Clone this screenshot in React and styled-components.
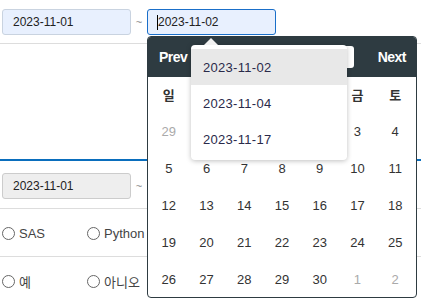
import styled, { createGlobalStyle } from "styled-components";

const GlobalStyle = createGlobalStyle`
  body {
    margin: 0;
    font-family: "Liberation Sans", "Noto Sans CJK KR", sans-serif;
    color: #333;
    background: #fff;
  }
`;

const days = ["일", "월", "화", "수", "목", "금", "토"];
const weeks = [
  [29, 30, 31, 1, 2, 3, 4],
  [5, 6, 7, 8, 9, 10, 11],
  [12, 13, 14, 15, 16, 17, 18],
  [19, 20, 21, 22, 23, 24, 25],
  [26, 27, 28, 29, 30, 1, 2],
];
const options = ["2023-11-02", "2023-11-04", "2023-11-17"];

const App = () => {
  return (
    <Page>
      <GlobalStyle />
      <TopSection>
        <RangeRow>
          <DateInput>2023-11-01</DateInput>
          <Tilde>~</Tilde>
          <DateInput $focused>
            <Caret />
            2023-11-02
          </DateInput>
        </RangeRow>
      </TopSection>
      <BottomSection>
        <RangeRow $bottom>
          <DateInput $disabled>2023-11-01</DateInput>
          <Tilde>~</Tilde>
        </RangeRow>
        <RadioRow>
          <Radio>
            <Circle />
            SAS
          </Radio>
          <Radio>
            <Circle />
            Python
          </Radio>
        </RadioRow>
        <RadioRow>
          <Radio>
            <Circle />예
          </Radio>
          <Radio>
            <Circle />
            아니오
          </Radio>
        </RadioRow>
      </BottomSection>

      <Calendar>
        <Header>
          <NavButton>Prev</NavButton>
          <MonthSelect />
          <NavButton>Next</NavButton>
        </Header>
        <Grid>
          {days.map((d) => (
            <WeekDay key={d}>{d}</WeekDay>
          ))}
          {weeks.map((w, wi) =>
            w.map((n, di) => (
              <Day
                key={wi + "-" + di}
                $muted={(wi === 0 && n > 20) || (wi === 4 && n < 10)}
              >
                {n}
              </Day>
            ))
          )}
        </Grid>
      </Calendar>

      <Dropdown>
        <Pointer />
        {options.map((o, i) => (
          <Option key={o} $active={i === 0}>
            {o}
          </Option>
        ))}
      </Dropdown>
    </Page>
  );
};

export default App;

const Page = styled.div`
  position: relative;
  width: 421px;
  height: 302px;
  overflow: hidden;
`;

const TopSection = styled.div`
  height: 161px;
  border-bottom: 2px solid #0a6ebd;
  box-sizing: border-box;
`;

const BottomSection = styled.div`
  display: flex;
  flex-direction: column;
`;

const RangeRow = styled.div`
  display: flex;
  align-items: center;
  padding: ${(p) => (p.$bottom ? "12px 2px 9px" : "9px 2px 8px")};
  border-bottom: 1px solid #ddd;
`;

const DateInput = styled.div`
  position: relative;
  width: 129px;
  height: 26px;
  box-sizing: border-box;
  display: flex;
  align-items: center;
  padding-left: 10px;
  font-size: 12px;
  color: #222;
  border-radius: 3px;
  border: 1px solid
    ${(p) => (p.$focused ? "#1a6fc9" : p.$disabled ? "#ccc" : "#c9d3e0")};
  background: ${(p) => (p.$disabled ? "#eeeeee" : "#e8f0fe")};
`;

const Caret = styled.span`
  position: absolute;
  left: 9px;
  top: 5px;
  width: 1px;
  height: 15px;
  background: #000;
`;

const Tilde = styled.span`
  width: 16px;
  text-align: center;
  font-size: 11px;
  color: #888;
`;

const RadioRow = styled.div`
  display: flex;
  align-items: center;
  height: 46px;
  border-bottom: 1px solid #ddd;
  padding-left: 2px;
  padding-top: 1px;
  box-sizing: content-box;
`;

const Radio = styled.label`
  display: flex;
  align-items: center;
  gap: 4px;
  width: 85px;
  font-size: 13px;
  color: #444;
`;

const Circle = styled.span`
  width: 11px;
  height: 11px;
  border: 1px solid #666;
  border-radius: 50%;
  background: #fff;
`;

const Calendar = styled.div`
  position: absolute;
  left: 147px;
  top: 36px;
  width: 270px;
  height: 262px;
  box-sizing: border-box;
  border: 1px solid #2e3b41;
  border-radius: 4px;
  background: #fff;
  overflow: hidden;
`;

const Header = styled.div`
  height: 40px;
  background: #2e3b41;
  display: flex;
  align-items: center;
  justify-content: space-between;
  padding: 0 10px 0 11px;
`;

const NavButton = styled.span`
  color: #fff;
  font-weight: bold;
  font-size: 14px;
  letter-spacing: -0.5px;
`;

const MonthSelect = styled.div`
  width: 160px;
  height: 22px;
  margin-left: 8px;
  margin-right: 24px;
  background: #fff;
  border-radius: 3px;
`;

const Grid = styled.div`
  display: grid;
  grid-template-columns: repeat(7, 1fr);
  grid-auto-rows: 37px;
  padding: 0 2px;
  margin-top: -1px;
`;

const WeekDay = styled.div`
  display: flex;
  align-items: center;
  justify-content: center;
  font-weight: bold;
  font-size: 13px;
  color: #333;
`;

const Day = styled.div`
  display: flex;
  align-items: center;
  justify-content: center;
  font-size: 13px;
  color: ${(p) => (p.$muted ? "#aaa" : "#333")};
`;

const Dropdown = styled.div`
  position: absolute;
  left: 191px;
  top: 45px;
  width: 156px;
  background: #fff;
  border-radius: 4px;
  box-shadow: 0 1px 5px rgba(0, 0, 0, 0.25);
  padding: 4px 0 3px;
`;

const Pointer = styled.div`
  position: absolute;
  left: 13px;
  top: -7px;
  width: 0;
  height: 0;
  border-left: 7px solid transparent;
  border-right: 7px solid transparent;
  border-bottom: 7px solid #f2f2f2;
`;

const Option = styled.div`
  height: 36px;
  display: flex;
  align-items: center;
  padding-left: 12px;
  font-size: 13px;
  letter-spacing: 0.3px;
  color: #2a2a4a;
  background: ${(p) => (p.$active ? "#e8e8e8" : "#fff")};
`;
